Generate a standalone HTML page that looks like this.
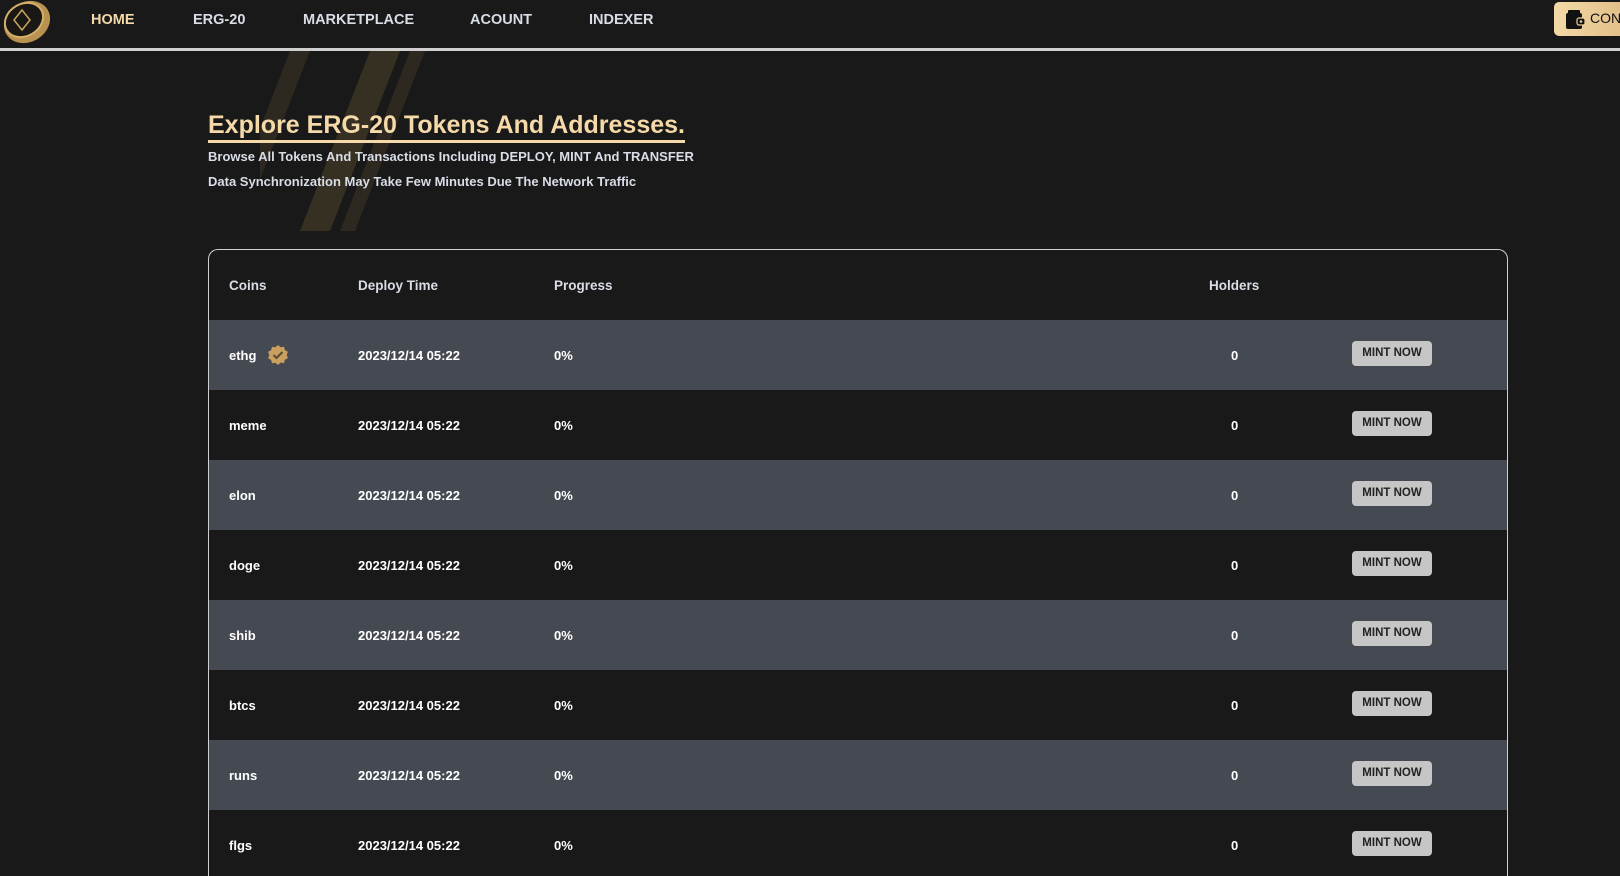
<!DOCTYPE html>
<html><head><meta charset="utf-8"><style>
*{margin:0;padding:0;box-sizing:border-box}
html,body{width:1620px;height:876px;overflow:hidden;background:#191919}
body{font-family:"Liberation Sans",Arial,sans-serif;color:#fff}
#wrap{position:relative;width:1620px;height:876px;overflow:hidden}
.nav{position:absolute;left:0;top:0;width:1620px;height:51px;border-bottom:3px solid #d0d0d0}
.nav a{position:absolute;top:12px;font-weight:bold;font-size:14.5px;color:#d8dde6;text-decoration:none}
.logo{position:absolute;left:0;top:0}
.conn{position:absolute;left:1554px;top:2px;width:66px;height:34px;border-radius:5px 0 0 5px;background:linear-gradient(90deg,#f3d9a6,#e3c089);color:#111;font-size:14px;padding:8px 0 0 36px;overflow:hidden;white-space:nowrap}
.stripes{position:absolute;left:260px;top:51px;width:200px;height:180px;overflow:hidden}
h1{position:absolute;left:208px;top:111px;font-size:25px;color:#f5d9a8;font-weight:bold;border-bottom:3px solid #f5d9a8;line-height:29px}
.sub{position:absolute;left:208px;font-size:13px;font-weight:bold;color:#d8dde6}
.tbl{position:absolute;left:208px;top:249px;width:1300px;height:627px;border:1px solid #d0d0d0;border-bottom:none;border-radius:10px 10px 0 0;overflow:hidden}
.row{position:absolute;left:0;width:1300px;height:70px;font-size:13px;font-weight:bold}
.row span{position:absolute;top:28px}
.alt{background:#454a52}
.hd span{color:#d8dde6;font-size:13.5px}
.btn{position:absolute;left:1143px;top:21px;width:80px;height:25px;border-radius:4px;background:#c6c6c6;color:#222;font-size:11.5px;text-align:center;line-height:25px}
</style></head><body><div id="wrap">
<div class="stripes"><svg width="200" height="180"><polygon points="30,0 50,0 -20,180 -40,180" fill="#3a3325" opacity=".6"/><polygon points="110,0 140,0 70,180 40,180" fill="#4a3f2a" opacity=".6"/><polygon points="150,0 165,0 95,180 80,180" fill="#3a3325" opacity=".6"/></svg></div>
<div class="nav">
<svg class="logo" width="52" height="46"><ellipse cx="27" cy="22" rx="24" ry="20" fill="#b89350" transform="rotate(-30 27 22)"/><ellipse cx="24" cy="20" rx="20" ry="16" fill="#1a1814" stroke="#d4ae6a" stroke-width="2" transform="rotate(-30 24 20)"/><path d="M22 10 L30 20 L22 30 L14 20Z" fill="none" stroke="#c9a35f" stroke-width="1.5"/></svg>
<a style="left:91px;color:#f5d9a8">HOME</a>
<a style="left:193px">ERG-20</a>
<a style="left:303px">MARKETPLACE</a>
<a style="left:470px">ACOUNT</a>
<a style="left:589px">INDEXER</a>
<div class="conn"><svg style="position:absolute;left:12px;top:8px" width="20" height="19"><rect x="0" y="3" width="16" height="16" rx="2" fill="#111"/><rect x="2" y="0" width="12" height="4" rx="1" fill="#111"/><rect x="11" y="8" width="8" height="7" rx="2" fill="#111" stroke="#eccc95" stroke-width="1.2"/><circle cx="15" cy="11.5" r="1.3" fill="#eccc95"/></svg>CONNECT</div>
</div>
<h1>Explore ERG-20 Tokens And Addresses.</h1>
<div class="sub" style="top:149px">Browse All Tokens And Transactions Including DEPLOY, MINT And TRANSFER</div>
<div class="sub" style="top:174px">Data Synchronization May Take Few Minutes Due The Network Traffic</div>
<div class="tbl">
<div class="row hd" style="top:0"><span style="left:20px">Coins</span><span style="left:149px">Deploy Time</span><span style="left:345px">Progress</span><span style="left:1000px">Holders</span></div>
<div class="row alt" style="top:70px"><span style="left:20px">ethg</span><svg style="position:absolute;left:58px;top:24px" width="22" height="22" viewBox="0 0 22 22"><path d="M11 1l2.6 2.2 3.4-.4.9 3.3 3 1.6-1.2 3.2 1.2 3.2-3 1.6-.9 3.3-3.4-.4L11 21l-2.6-2.2-3.4.4-.9-3.3-3-1.6L2.3 11 1.1 7.8l3-1.6.9-3.3 3.4.4z" fill="#c9a060"/><path d="M6.5 11l3 3 6-6" fill="none" stroke="#5a4a30" stroke-width="2"/></svg><span style="left:149px">2023/12/14 05:22</span><span style="left:345px">0%</span><span style="left:1022px">0</span><div class="btn">MINT NOW</div></div>
<div class="row" style="top:140px"><span style="left:20px">meme</span><span style="left:149px">2023/12/14 05:22</span><span style="left:345px">0%</span><span style="left:1022px">0</span><div class="btn">MINT NOW</div></div>
<div class="row alt" style="top:210px"><span style="left:20px">elon</span><span style="left:149px">2023/12/14 05:22</span><span style="left:345px">0%</span><span style="left:1022px">0</span><div class="btn">MINT NOW</div></div>
<div class="row" style="top:280px"><span style="left:20px">doge</span><span style="left:149px">2023/12/14 05:22</span><span style="left:345px">0%</span><span style="left:1022px">0</span><div class="btn">MINT NOW</div></div>
<div class="row alt" style="top:350px"><span style="left:20px">shib</span><span style="left:149px">2023/12/14 05:22</span><span style="left:345px">0%</span><span style="left:1022px">0</span><div class="btn">MINT NOW</div></div>
<div class="row" style="top:420px"><span style="left:20px">btcs</span><span style="left:149px">2023/12/14 05:22</span><span style="left:345px">0%</span><span style="left:1022px">0</span><div class="btn">MINT NOW</div></div>
<div class="row alt" style="top:490px"><span style="left:20px">runs</span><span style="left:149px">2023/12/14 05:22</span><span style="left:345px">0%</span><span style="left:1022px">0</span><div class="btn">MINT NOW</div></div>
<div class="row" style="top:560px;height:67px"><span style="left:20px">flgs</span><span style="left:149px">2023/12/14 05:22</span><span style="left:345px">0%</span><span style="left:1022px">0</span><div class="btn">MINT NOW</div></div>
</div>
</div></body></html>
